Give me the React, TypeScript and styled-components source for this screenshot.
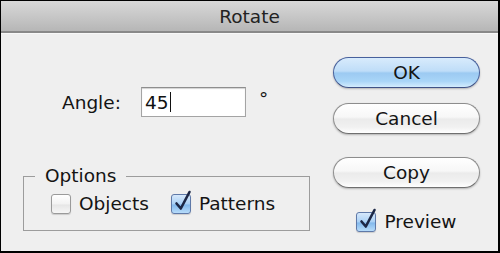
import React from "react";
import styled, { createGlobalStyle } from "styled-components";

const GlobalStyle = createGlobalStyle`
  html, body {
    margin: 0;
    padding: 0;
    background: #000;
  }
  body {
    width: 500px;
    height: 253px;
    overflow: hidden;
    font-family: "DejaVu Sans", "Liberation Sans", sans-serif;
  }
`;

const Frame = styled.div`
  width: 500px;
  height: 253px;
  box-sizing: border-box;
  background: #000;
  padding: 1px 2px 2px 1px;
`;

const Dialog = styled.div`
  width: 100%;
  height: 100%;
  display: flex;
  flex-direction: column;
  background: #efefef;
  color: #141414;
  font-size: 18.5px;
`;

const TitleBar = styled.div`
  height: 30px;
  flex: none;
  display: flex;
  align-items: center;
  justify-content: center;
  background: linear-gradient(#d8d8d8, #c4c4c4 60%, #b6b6b6);
  border-bottom: 2px solid #898989;
  color: #222;
  font-size: 18.5px;
`;

const Body = styled.div`
  flex: 1;
  display: flex;
  border-top: 1px solid #f8f8f8;
`;

const LeftColumn = styled.div`
  width: 332px;
  display: flex;
  flex-direction: column;
`;

const AngleRow = styled.div`
  display: flex;
  align-items: center;
  margin-top: 53px;
  padding-left: 61px;
  height: 30px;
`;

const Label = styled.span`
  width: 79px;
`;

const TextField = styled.div`
  width: 105px;
  height: 30px;
  box-sizing: border-box;
  border: 1px solid #a4a4a4;
  border-top-color: #8e8e8e;
  box-shadow: inset 0 1px 1px rgba(0, 0, 0, 0.18);
  background: #fff;
  display: flex;
  align-items: center;
  padding-left: 3px;
  color: #111;
`;

const Caret = styled.span`
  display: inline-block;
  width: 1px;
  height: 20px;
  margin-left: 1px;
  background: #111;
`;

const Degree = styled.span`
  margin-left: 13px;
  margin-top: -8px;
`;

const GroupBox = styled.fieldset`
  margin: 49px 0 0 22px;
  padding: 0;
  width: 287px;
  box-sizing: border-box;
  border: 1px solid #9c9c9c;
  min-inline-size: auto;
`;

const GroupTitle = styled.legend`
  margin-left: 11px;
  padding: 0 10px;
  line-height: 20px;
`;

const GroupContent = styled.div`
  display: flex;
  align-items: center;
  padding: 7px 0 16px 27px;
`;

const CheckRow = styled.label<{ $gap?: number }>`
  display: flex;
  align-items: center;
  height: 21px;
  margin-right: ${(p) => p.$gap ?? 0}px;
`;

const Box = styled.span<{ $checked: boolean }>`
  position: relative;
  width: 20px;
  height: 20px;
  box-sizing: border-box;
  border-radius: 3px;
  margin-right: 8px;
  border: 1px solid ${(p) => (p.$checked ? "#5f79a8" : "#9a9a9a")};
  background: ${(p) =>
    p.$checked
      ? "linear-gradient(#d6e8fb, #a9d0f5 50%, #82b8ec 55%, #b7dcfa)"
      : "linear-gradient(#ffffff, #f2f2f2 50%, #e6e6e6 55%, #f6f6f6)"};
  box-shadow: 0 1px 1px rgba(0, 0, 0, 0.15);
  svg {
    position: absolute;
    left: 2px;
    top: -6px;
  }
`;

const RightColumn = styled.div`
  width: 147px;
  display: flex;
  flex-direction: column;
  align-items: center;
  padding-top: 23px;
`;

const Button = styled.button<{ $primary?: boolean; $gap: number }>`
  width: 147px;
  height: 31px;
  margin-bottom: ${(p) => p.$gap}px;
  border-radius: 16px;
  font-family: inherit;
  font-size: 18.5px;
  color: #141414;
  padding: 0 0 1px;
  border: 1px solid ${(p) => (p.$primary ? "#47609c" : "#8d8d8d")};
  border-bottom-color: ${(p) => (p.$primary ? "#3f5285" : "#6f6f6f")};
  background: ${(p) =>
    p.$primary
      ? "linear-gradient(#d8ebfc, #bfddf8 45%, #9ccaf2 52%, #a9d5f7 80%, #d3ecfd)"
      : "linear-gradient(#ffffff, #f7f7f7 45%, #ebebeb 52%, #f1f1f1 80%, #ffffff)"};
  box-shadow: 0 1px 2px rgba(0, 0, 0, 0.25);
`;

const Check: React.FC<{ checked: boolean }> = ({ checked }) => (
  <Box $checked={checked}>
    {checked && (
      <svg width="20" height="24" viewBox="0 0 20 24">
        <path
          d="M2.5 14.5 L6.8 19.5 L15.5 3"
          fill="none"
          stroke="#1c2745"
          strokeWidth="2.6"
          strokeLinecap="round"
          strokeLinejoin="round"
        />
      </svg>
    )}
  </Box>
);

export default function App() {
  return (
    <Frame>
      <GlobalStyle />
      <Dialog>
        <TitleBar>Rotate</TitleBar>
        <Body>
          <LeftColumn>
            <AngleRow>
              <Label>Angle:</Label>
              <TextField>
                45
                <Caret />
              </TextField>
              <Degree>°</Degree>
            </AngleRow>
            <GroupBox>
              <GroupTitle>Options</GroupTitle>
              <GroupContent>
                <CheckRow $gap={22}>
                  <Check checked={false} />
                  Objects
                </CheckRow>
                <CheckRow>
                  <Check checked />
                  Patterns
                </CheckRow>
              </GroupContent>
            </GroupBox>
          </LeftColumn>
          <RightColumn>
            <Button $primary $gap={15}>
              OK
            </Button>
            <Button $gap={23}>Cancel</Button>
            <Button $gap={23}>Copy</Button>
            <CheckRow>
              <Check checked />
              Preview
            </CheckRow>
          </RightColumn>
        </Body>
      </Dialog>
    </Frame>
  );
}
